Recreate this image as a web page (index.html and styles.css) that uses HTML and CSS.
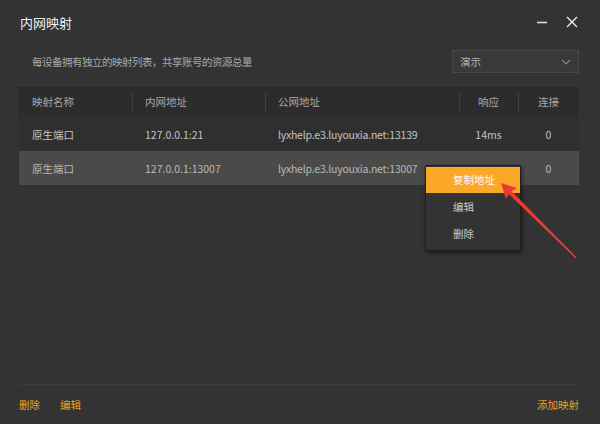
FILE: index.html
```html
<!DOCTYPE html>
<html lang="zh-CN">
<head>
<meta charset="UTF-8">
<title>内网映射</title>
<link rel="stylesheet" href="styles.css">
</head>
<body>
<div class="window">
    <div class="titlebar">
        <span class="title">内网映射</span>
        <div class="win-btns">
            <svg class="btn-min" width="12" height="12" viewBox="0 0 12 12"><path d="M1 6.5h10" stroke="#ddd" stroke-width="1.6"/></svg>
            <svg class="btn-close" width="12" height="12" viewBox="0 0 12 12"><path d="M1 1L11 11M11 1L1 11" stroke="#eee" stroke-width="1.4"/></svg>
        </div>
    </div>
    <div class="toolbar">
        <span class="hint">每设备拥有独立的映射列表，共享账号的资源总量</span>
        <div class="select">
            <span>演示</span>
            <svg width="10" height="6" viewBox="0 0 10 6"><path d="M1 1l4 4 4-4" fill="none" stroke="#888" stroke-width="1.2"/></svg>
        </div>
    </div>
    <div class="table">
        <div class="row head">
            <div class="cell">映射名称</div>
            <div class="cell sep">内网地址</div>
            <div class="cell sep">公网地址</div>
            <div class="cell sep center">响应</div>
            <div class="cell sep center">连接</div>
        </div>
        <div class="row">
            <div class="cell">原生端口</div>
            <div class="cell">127.0.0.1:21</div>
            <div class="cell domain">lyxhelp.e3.luyouxia.net:13139</div>
            <div class="cell center">14ms</div>
            <div class="cell center">0</div>
        </div>
        <div class="row selected">
            <div class="cell">原生端口</div>
            <div class="cell">127.0.0.1:13007</div>
            <div class="cell domain">lyxhelp.e3.luyouxia.net:13007</div>
            <div class="cell center"></div>
            <div class="cell center">0</div>
        </div>
    </div>
    <div class="spacer"></div>
    <div class="footer">
        <div class="links">
            <span>删除</span>
            <span>编辑</span>
        </div>
        <span>添加映射</span>
    </div>

    <div class="menu">
        <div class="item active">复制地址</div>
        <div class="item">编辑</div>
        <div class="item">删除</div>
    </div>
    <svg class="arrow" width="90" height="90" viewBox="0 0 90 90">
        <path d="M3 3L19 8L13.6 11.2L78.6 77.4L77.6 78.4L10.8 14L8 19Z" fill="#ec3a32"/>
    </svg>
</div>
</body>
</html>
```

FILE: styles.css
```css
body {
    margin: 0;
    font-family: "Noto Sans CJK SC", "Noto Sans", sans-serif;
    font-size: 10.5px;
    background-color: #333;
}
.window {
    position: relative;
    width: 600px;
    height: 424px;
    background-color: #333;
    display: flex;
    flex-direction: column;
    overflow: hidden;
}
.titlebar {
    height: 44px;
    display: flex;
    align-items: center;
    justify-content: space-between;
    padding: 0 22px 0 20px;
}
.title {
    color: #f0f0f0;
    font-size: 13px;
}
.win-btns {
    display: flex;
    align-items: center;
    gap: 18px;
}
.toolbar {
    height: 23px;
    margin-top: 6px;
    display: flex;
    align-items: center;
    justify-content: space-between;
    padding: 0 21px 0 32px;
}
.hint {
    color: #a8a8a8;
    letter-spacing: -0.5px;
}
.select {
    width: 111px;
    height: 21px;
    border: 1px solid #474747;
    background-color: #393939;
    display: flex;
    align-items: center;
    justify-content: space-between;
    padding: 0 7px;
    box-sizing: content-box;
    color: #bbb;
}
.table {
    margin: 12px 21px 0 19px;
}
.row {
    display: grid;
    grid-template-columns: 113px 133px 194px 59px 61px;
    height: 34px;
    align-items: center;
    color: #c4c4c4;
    background-color: #2f2f2f;
}
.row.head {
    height: 31px;
    border-top: 1px solid #3a3a3a;
    background-color: #2c2c2c;
    color: #a8a8a8;
}
.row.selected {
    background-color: #4a4a4a;
    color: #b8b8b8;
}
.cell {
    padding-left: 13px;
    white-space: nowrap;
    position: relative;
}
.cell.domain {
    letter-spacing: -0.2px;
}
.cell.center {
    padding-left: 0;
    text-align: center;
}
.sep::before {
    content: "";
    position: absolute;
    left: 0;
    top: -2px;
    height: 20px;
    border-left: 1px solid #3e3e3e;
}
.spacer {
    flex: 1;
}
.footer {
    margin: 0 21px 0 19px;
    height: 39px;
    border-top: 1px solid #3c3c3c;
    display: flex;
    align-items: center;
    justify-content: space-between;
    color: #eea024;
    box-sizing: content-box;
}
.links {
    display: flex;
    gap: 20px;
}
.menu {
    position: absolute;
    left: 425px;
    top: 165px;
    width: 94px;
    padding: 1px 0 3px;
    background-color: #333;
    border: 1px solid #1f1f1f;
    box-shadow: 1px 2px 4px rgba(0, 0, 0, 0.5);
}
.item {
    height: 27px;
    line-height: 27px;
    padding-left: 27px;
    color: #c8c8c8;
}
.item.active {
    height: 26px;
    line-height: 26px;
    background-color: #fba728;
    color: #fff;
}
.arrow {
    position: absolute;
    left: 498px;
    top: 180px;
}
```
